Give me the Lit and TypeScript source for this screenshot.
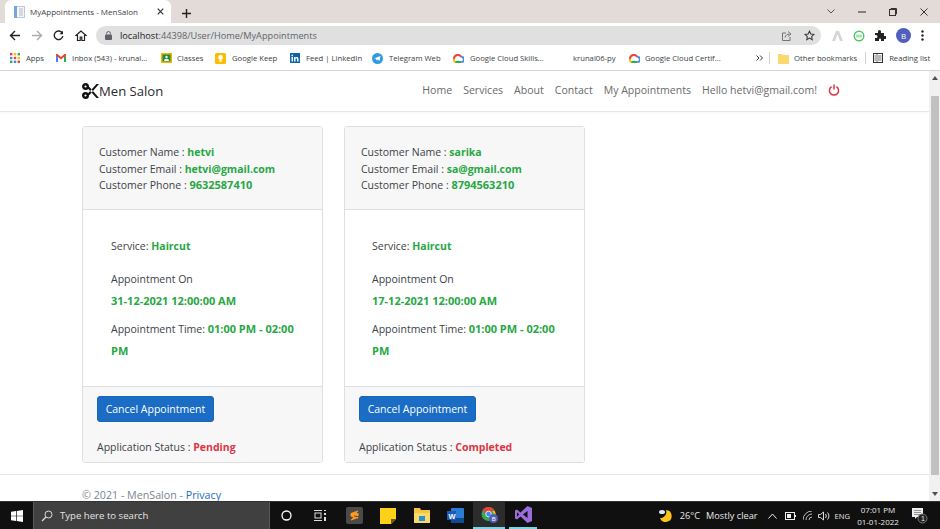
import { LitElement, html, css, svg } from "lit";
import { customElement } from "lit/decorators.js";

const cloud = svg`<svg width="12" height="10" viewBox="0 0 24 20"><path d="M4 12a8 8 0 0 1 15-4" fill="none" stroke="#ea4335" stroke-width="4"/><path d="M19 8a5 5 0 0 1 0 10" fill="none" stroke="#4285f4" stroke-width="4"/><path d="M19 18H6" stroke="#34a853" stroke-width="4"/><path d="M7 18a5 5 0 0 1-3-6" fill="none" stroke="#fbbc04" stroke-width="4"/></svg>`;
const bookmarks = [
  { w: 46, gap: 6, t: "Apps", i: svg`<svg width="10" height="10" viewBox="0 0 10 10"><g fill="#ea4335"><rect width="2.4" height="2.4"/><rect x="3.8" width="2.4" height="2.4" fill="#fbbc04"/><rect x="7.6" width="2.4" height="2.4" fill="#34a853"/><rect y="3.8" width="2.4" height="2.4" fill="#4285f4"/><rect x="3.8" y="3.8" width="2.4" height="2.4"/><rect x="7.6" y="3.8" width="2.4" height="2.4" fill="#fbbc04"/><rect y="7.6" width="2.4" height="2.4" fill="#34a853"/><rect x="3.8" y="7.6" width="2.4" height="2.4" fill="#4285f4"/><rect x="7.6" y="7.6" width="2.4" height="2.4"/></g></svg>` },
  { w: 105, gap: 6, t: "Inbox (543) - krunal...", i: svg`<svg width="10" height="8" viewBox="0 0 10 8"><path d="M0 0h1.500L5 3l3.500-3H10v8H8V3L5 5.500 2 3v5H0z" fill="#ea4335"/><path d="M0 2v6h2V3z" fill="#4285f4"/><path d="M10 2v6H8V3z" fill="#34a853"/></svg>` },
  { w: 54, gap: 5, t: "Classes", i: svg`<svg width="11" height="10" viewBox="0 0 11 10"><rect width="11" height="10" fill="#f4b400"/><rect x="1.500" y="1.500" width="8" height="7" fill="#1e8e3e"/><circle cx="5.500" cy="4" r="1.200" fill="#fff"/><path d="M3 8c0-3 5-3 5 0z" fill="#fff"/></svg>` },
  { w: 75, gap: 6, t: "Google Keep", i: svg`<svg width="11" height="11" viewBox="0 0 11 11"><rect width="11" height="11" rx="1.500" fill="#fbbc04"/><circle cx="5.500" cy="4.500" r="2.400" fill="#fff"/><rect x="4.300" y="7.200" width="2.400" height="1.500" fill="#fff"/></svg>` },
  { w: 82, gap: 6, t: "Feed | LinkedIn", i: svg`<svg width="10" height="10" viewBox="0 0 10 10"><rect width="10" height="10" fill="#0a66a8"/><rect x="1.500" y="4" width="1.500" height="4.500" fill="#fff"/><rect x="1.500" y="1.700" width="1.500" height="1.500" fill="#fff"/><path d="M4 4h1.400v.7C6.200 3.600 8.500 3.700 8.500 5.800v2.700H7V6.100c0-1.300-1.500-1.200-1.500 0v2.400H4z" fill="#fff"/></svg>` },
  { w: 80, gap: 6, t: "Telegram Web", i: svg`<svg width="11" height="11" viewBox="0 0 11 11"><circle cx="5.500" cy="5.500" r="5.500" fill="#2f9ae0"/><path d="M2 5.500l6.500-2.600-1 5-2-1.400-1 1-.4-1.800z" fill="#fff"/></svg>` },
  { w: 121, gap: 6, t: "Google Cloud Skills...", i: cloud },
  { w: 55, gap: 0, t: "krunal06-py", i: null },
  { w: 128, gap: 5, t: "Google Cloud Certif...", i: cloud },
];

const cards = [
  { name: "hetvi", email: "hetvi@gmail.com", phone: "9632587410", on: "31-12-2021 12:00:00 AM", status: "Pending" },
  { name: "sarika", email: "sa@gmail.com", phone: "8794563210", on: "17-12-2021 12:00:00 AM", status: "Completed" },
];

@customElement("app-root")
export class AppRoot extends LitElement {
  static styles = css`
    :host { display: flex; flex-direction: column; width: 940px; height: 529px; overflow: hidden; background: #fff; font-family: "Open Sans", "Noto Sans", sans-serif; color: #212529; }
    svg { display: block; flex: none; }

    .tabs { height: 23px; flex: none; background: #e3dbd8; display: flex; align-items: flex-end; padding-left: 5px; }
    .tab { width: 166px; height: 23px; background: #fff; border-radius: 6px 6px 0 0; display: flex; align-items: center; padding: 0 0 0 9px; box-sizing: border-box; font: 8px "Open Sans", sans-serif; color: #3c4043; }
    .tab .ttl { margin-left: 5px; flex: 1; white-space: nowrap; }
    .tab .x { margin-right: 7px; }
    .newtab { margin: 0 0 5px 11px; }
    .winctl { margin-left: auto; display: flex; align-items: center; align-self: center; gap: 23px; padding-right: 12px; }

    .toolbar { height: 23px; flex: none; margin-top: 1px; display: flex; align-items: center; padding-left: 9px; background: #fff; }
    .nav { display: flex; align-items: center; gap: 10px; }
    .nav .home { margin-left: 1px; }
    .omni { margin-left: 9px; width: 725px; height: 19px; border-radius: 10px; background: #e0e0e0; display: flex; align-items: center; padding-left: 9px; box-sizing: border-box; font: 9.2px "Open Sans", sans-serif; color: #5f6368; }
    .omni b { font-weight: 400; color: #202124; }
    .omni .url { margin-left: 8px; flex: 1; }
    .omni .r { display: flex; gap: 12px; align-items: center; padding-right: 6px; }
    .tb-r { display: flex; align-items: center; gap: 10px; margin-left: 11px; }
    .avatar { width: 15px; height: 15px; border-radius: 50%; background: #4f5fbb; color: #fff; font-size: 8px; display: flex; align-items: center; justify-content: center; }

    .bm { height: 23px; flex: none; box-sizing: border-box; display: flex; align-items: center; padding: 0 0 1px 10px; border-bottom: 0; box-shadow: inset 0 -1px 0 #fff; font: 7.7px "Open Sans", sans-serif; color: #3c4043; background: #fff; }
    .rule { height: 1px; flex: none; background: #d4d4d4; }
    .bi { display: flex; align-items: center; white-space: nowrap; flex: none; overflow: hidden; }
    .bm .end { display: flex; align-items: center; flex: none; }
    .sep { width: 1px; height: 12px; background: #d0d0d0; margin-left: 6px; }
    .sep.s2 { margin-left: 8px; }
    .folder { margin-left: 8px; }
    .ob { margin-left: 5px; }
    .rl-i { margin-left: 7px; }
    .rl { margin-left: 6px; }

    .view { flex: 1; min-height: 0; display: flex; }
    .page { flex: 1; min-width: 0; overflow: hidden; font-size: 10.5px; }
    .navbar { height: 40px; border-bottom: 1px solid #e4e6e8; box-shadow: 0 1px 3px rgba(0,0,0,.04); display: flex; align-items: center; padding: 0 89px 0 82px; }
    .brand { display: flex; align-items: center; font-size: 13.1px; color: #2b2b2b; }
    .links { margin-left: auto; display: flex; align-items: center; gap: 11px; font-size: 10.55px; color: #6a6a6a; margin-top: -2px; }
    .cards { display: flex; gap: 21px; padding: 14px 0 0 82px; align-items: flex-start; }
    .card { width: 241px; height: 337px; box-sizing: border-box; border: 1px solid #dfdfdf; border-radius: 3px; display: flex; flex-direction: column; font-size: 10.5px; color: #3c4248; }
    .hd { height: 83px; flex: none; box-sizing: border-box; background: #f7f7f7; border-bottom: 1px solid #dfdfdf; padding: 17px 16px 0; line-height: 16.5px; }
    .bd { flex: 1; padding: 25px 24px 0 28px; line-height: 22px; }
    .card + .card .bd { padding-left: 27px; }
    .bd p { margin: 0 0 11px; }
    .bd p.tight { margin-bottom: 6px; }
    .ft { height: 76px; flex: none; background: #f7f7f7; border-top: 1px solid #dfdfdf; padding: 8.500px 14px 0; box-sizing: border-box; }
    .btn { width: 117px; height: 26px; background: #1a6cc4; color: #fff; border: 1px solid #1766ba; border-radius: 3px; font: 10.5px "Open Sans", sans-serif; padding: 0; display: block; }
    .stat { margin-top: 17px; line-height: 16px; }
    .g { color: #28a745; font-weight: 700; }
    .n { font-size: 11px; }
    .rd { color: #dc3545; font-weight: 700; }
    .foot { margin-top: 11px; border-top: 1px solid #e4e6e8; padding: 13px 0 0 82px; font-size: 10.7px; color: #7c858c; line-height: 14px; }
    .foot a { color: #1b6ec2; }

    .sb { width: 11px; flex: none; background: #f1f1f1; display: flex; flex-direction: column; align-items: center; }
    .sb .arrow { height: 25px; flex: none; padding-top: 5px; box-sizing: border-box; }
    .sb .thumb { width: 8px; height: 379px; background: #c1c1c1; flex: none; }
    .sb .arrow2 { margin-top: auto; height: auto; padding: 0 0 5px; }

    .taskbar { height: 28px; flex: none; background: #101010; display: flex; align-items: center; color: #e8e8e8; font: 9px "Open Sans", sans-serif; border-top: 1px solid #333; box-sizing: border-box; }
    .win { width: 33px; display: flex; justify-content: center; flex: none; }
    .search { width: 237px; height: 27px; background: #404040; border-left: 1px solid #5a5a5a; border-right: 1px solid #5a5a5a; display: flex; align-items: center; padding-left: 7px; box-sizing: border-box; font-size: 9.6px; color: #e4e4e4; gap: 7px; flex: none; }
    .apps { display: flex; align-items: center; height: 27px; flex: none; }
    .app { display: flex; align-items: center; justify-content: center; height: 27px; flex: none; box-sizing: border-box; }
    .app.on { background: #2c2c2c; border-bottom: 2px solid #76d6e8; }
    .app.u { border-bottom: 2px solid #76d6e8; }
    .w28 { width: 28px; margin-left: 4px; }
    .w31 { width: 31px; }
    .w32 { width: 32px; }
    .w33 { width: 33px; }
    .w36 { width: 36px; }
    .chrome { margin-left: 2px; }
    .tray { margin-left: auto; display: flex; align-items: center; height: 27px; flex: none; }
    .temp { margin-left: 8px; font-size: 9.2px; }
    .cond { margin-left: 6px; font-size: 9.2px; }
    .caret { margin-left: 10px; }
    .batt { margin-left: 8px; }
    .wifi { margin-left: 7px; }
    .spk { margin-left: 5px; }
    .eng { margin-left: 5px; font-size: 7.6px; }
    .clock { text-align: center; line-height: 12px; font-size: 8px; width: 44px; margin-left: 6px; }
    .notif { margin: 0 12px 0 11px; }
  `;

  render() {
    return html`
      <div class="tabs">
        <div class="tab">
          <svg width="11" height="12" viewBox="0 0 11 12"><rect x=".5" y=".5" width="10" height="11" fill="#f4f6fa" stroke="#bcc8da"/><rect x="0" y="0" width="3" height="12" fill="#7aa5d8"/><path d="M5 3h4M5 5h4M5 7h4M5 9h4" stroke="#bbb"/></svg>
          <span class="ttl">MyAppointments - MenSalon</span>
          <svg class="x" width="7" height="7" viewBox="0 0 7 7"><path d="M.7.7l5.600 5.600M6.300.7L.7 6.300" stroke="#333" stroke-width="1.200"/></svg>
        </div>
        <svg class="newtab" width="9" height="9" viewBox="0 0 9 9"><path d="M4.500 0v9M0 4.500h9" stroke="#222" stroke-width="1.400"/></svg>
        <div class="winctl">
          <svg width="8" height="5" viewBox="0 0 8 5"><path d="M.5.500L4 4 7.500.5" fill="none" stroke="#555"/></svg>
          <svg width="8" height="2" viewBox="0 0 8 2"><path d="M0 1h8" stroke="#444" stroke-width="1.200"/></svg>
          <svg width="8" height="8" viewBox="0 0 8 8"><rect x=".5" y="1.500" width="6" height="6" fill="none" stroke="#333"/><path d="M2 1.500V.5h5.500V6H6.500" fill="none" stroke="#333"/></svg>
          <svg width="8" height="8" viewBox="0 0 8 8"><path d="M.5.5l7 7M7.500.5l-7 7" stroke="#333"/></svg>
        </div>
      </div>

      <div class="toolbar">
        <div class="nav">
          <svg width="12" height="11" viewBox="0 0 12 11"><path d="M11 5.500H1.500M6 1L1.500 5.500 6 10" fill="none" stroke="#222" stroke-width="1.400"/></svg>
          <svg width="12" height="11" viewBox="0 0 12 11"><path d="M1 5.500h9.500M6 1l4.500 4.500L6 10" fill="none" stroke="#aaa" stroke-width="1.400"/></svg>
          <svg width="11" height="11" viewBox="0 0 11 11"><path d="M9.300 3.200A4.300 4.300 0 1 0 9.800 6" fill="none" stroke="#222" stroke-width="1.400"/><path d="M10 .8v3.500H6.500z" fill="#222"/></svg>
          <svg class="home" width="12" height="11" viewBox="0 0 12 11"><path d="M6 1L1 5.500h1.500v5h2.700V7h1.600v3.500h2.700v-5H11z" fill="none" stroke="#222" stroke-width="1.200"/></svg>
        </div>
        <div class="omni">
          <svg width="7" height="9" viewBox="0 0 7 9"><rect y="3.500" width="7" height="5.500" rx="1" fill="#5f6368"/><path d="M1.700 3.500V2.300a1.800 1.800 0 0 1 3.600 0v1.200" fill="none" stroke="#5f6368"/></svg>
          <span class="url"><b>localhost</b>:44398/User/Home/MyAppointments</span>
          <span class="r">
            <svg width="10" height="10" viewBox="0 0 10 10"><path d="M4 2H.5v7.500h7.500V6M3 6.500c.5-2.500 2.500-3.500 4.500-3.500M6 .5L9 3 6 5.500" fill="none" stroke="#666" stroke-width=".9"/></svg>
            <svg width="11" height="11" viewBox="0 0 24 24"><path d="M12 2.500l2.900 6.300 6.800.8-5 4.700 1.300 6.800-6-3.400-6 3.400 1.300-6.800-5-4.700 6.800-.8z" fill="none" stroke="#333" stroke-width="2.200"/></svg>
          </span>
        </div>
        <div class="tb-r">
          <svg width="11" height="10" viewBox="0 0 11 10"><path d="M0 10L4 0h3l4 10H8L5.500 3 3 10z" fill="#d5d5d5"/></svg>
          <svg width="12" height="12" viewBox="0 0 12 12"><circle cx="6" cy="6" r="4.800" fill="#fff" stroke="#55c56a" stroke-width="1.400"/><path d="M4 4.500v3M6 4.500v3M8 4.500v3" stroke="#55c56a"/></svg>
          <svg width="11" height="11" viewBox="0 0 11 11"><path d="M0 3h3V1.500a1.500 1.500 0 0 1 3 0V3h3v3h1a1.500 1.500 0 0 1 0 3H9v2H6V9.500a1 1 0 0 0-2 0V11H0V8h1a1.500 1.500 0 0 0 0-3H0z" fill="#222"/></svg>
          <span class="avatar">B</span>
          <svg width="3" height="11" viewBox="0 0 3 11"><g fill="#222"><circle cx="1.500" cy="1.500" r="1.200"/><circle cx="1.500" cy="5.500" r="1.200"/><circle cx="1.500" cy="9.500" r="1.200"/></g></svg>
        </div>
      </div>

      <div class="bm">
        ${bookmarks.map((b) => html`<div class="bi" style="width:${b.w}px">${b.i}<span style="margin-left:${b.gap}px">${b.t}</span></div>`)}
        <span class="end">
          <svg width="7" height="6" viewBox="0 0 7 6"><path d="M.5.500L3 3 .5 5.500M4 .5L6.500 3 4 5.500" fill="none" stroke="#333" stroke-width="1"/></svg>
          <span class="sep"></span>
          <svg class="folder" width="11" height="11" viewBox="0 0 11 11"><path d="M0 1h4l1 1h6v9H0z" fill="#fbd96e"/></svg>
          <span class="ob">Other bookmarks</span>
          <span class="sep s2"></span>
          <svg class="rl-i" width="10" height="10" viewBox="0 0 10 10"><rect x=".5" y=".5" width="9" height="9" fill="none" stroke="#333"/><path d="M4 1v8M1.500 3h1.500M1.500 5h1.500M1.500 7h1.500M5 3h3.500M5 5h3.500M5 7h3.500" stroke="#333" stroke-width=".7"/></svg>
          <span class="rl">Reading list</span>
        </span>
      </div>
      <div class="rule"></div>

      <div class="view">
        <div class="page">
          <div class="navbar">
            <div class="brand">
              <svg width="17" height="16" viewBox="0 0 17 16"><g fill="none" stroke="#111" stroke-width="2.400"><circle cx="3.500" cy="3.500" r="2.300"/><circle cx="3.500" cy="12.500" r="2.300"/></g><path d="M5 4.500L14.500 15H17L7.500 4zM5 11.500L14.500 1H17L7.500 12z" fill="#111"/></svg>
              <span>Men Salon</span>
            </div>
            <div class="links">
              <span>Home</span><span>Services</span><span>About</span><span>Contact</span><span>My Appointments</span><span>Hello hetvi@gmail.com!</span>
              <svg width="12" height="12" viewBox="0 0 12 12"><path d="M3.600 2.600a4.600 4.600 0 1 0 4.800 0" fill="none" stroke="#dc3545" stroke-width="1.500"/><path d="M6 .5v5" stroke="#dc3545" stroke-width="1.500"/></svg>
            </div>
          </div>
          <div class="cards">
            ${cards.map((c) => html`
              <div class="card">
                <div class="hd">
                  Customer Name : <span class="g">${c.name}</span><br>
                  Customer Email : <span class="g">${c.email}</span><br>
                  Customer Phone : <span class="g n">${c.phone}</span>
                </div>
                <div class="bd">
                  <p>Service: <span class="g">Haircut</span></p>
                  <p class="tight">Appointment On<br><span class="g n">${c.on}</span></p>
                  <p>Appointment Time: <span class="g n">01:00 PM - 02:00 PM</span></p>
                </div>
                <div class="ft">
                  <button class="btn">Cancel Appointment</button>
                  <div class="stat">Application Status : <span class="rd">${c.status}</span></div>
                </div>
              </div>`)}
          </div>
          <div class="foot">© 2021 - MenSalon - <a>Privacy</a></div>
        </div>
        <div class="sb">
          <div class="arrow"><svg width="6" height="4" viewBox="0 0 6 4"><path d="M3 0l3 4H0z" fill="#505050"/></svg></div>
          <div class="thumb"></div>
          <div class="arrow arrow2"><svg width="6" height="4" viewBox="0 0 6 4"><path d="M3 4l3-4H0z" fill="#505050"/></svg></div>
        </div>
      </div>

      <div class="taskbar">
        <div class="win"><svg width="12" height="12" viewBox="0 0 12 12"><path d="M0 1.700l5-.7v4.700H0zM5.700.9L12 0v5.700H5.700zM0 6.300h5V11l-5-.7zM5.700 6.300H12V12l-6.300-.9z" fill="#fff"/></svg></div>
        <div class="search">
          <svg width="12" height="12" viewBox="0 0 12 12"><circle cx="7.500" cy="4.500" r="3.500" fill="none" stroke="#ddd"/><path d="M5 7L1 11" stroke="#ddd" stroke-width="1.200"/></svg>
          <span>Type here to search</span>
        </div>
        <div class="apps">
          <div class="app w33"><svg width="11" height="11" viewBox="0 0 11 11"><circle cx="5.500" cy="5.500" r="4.500" fill="none" stroke="#fff" stroke-width="1.300"/></svg></div>
          <div class="app w33"><svg width="12" height="11" viewBox="0 0 12 11"><path d="M0 0h8v1H0zM0 10h8v1H0z" fill="#ddd"/><rect x="1" y="3" width="6" height="5" fill="none" stroke="#ddd"/><path d="M10 0h2v1h-2zM10 3h2v2h-2zM10 7h2v4h-2z" fill="#ddd"/></svg></div>
          <div class="app w36"><svg width="17" height="17" viewBox="0 0 17 17"><rect width="17" height="17" rx="2" fill="#4a4a4a"/><path d="M12 4L5 6.500v2.500l7 2v-.5L5 13M5 6.500l7 2.500V6" fill="#ff9a1f" stroke="#ff9a1f"/></svg></div>
          <div class="app w32"><svg width="16" height="16" viewBox="0 0 16 16"><path d="M0 0h16v11l-5 5H0z" fill="#fcd116"/><path d="M16 11l-5 5v-5z" fill="#6b5a10"/></svg></div>
          <div class="app w36"><svg width="16" height="15" viewBox="0 0 16 15"><path d="M0 0h6l1 2h9v13H0z" fill="#f5c542"/><rect y="5" width="16" height="10" fill="#fbd968"/><rect x="5" y="8" width="6" height="5" fill="#2b8fd4"/></svg></div>
          <div class="app w31"><svg width="17" height="15" viewBox="0 0 17 15"><rect x="4" width="13" height="15" rx="1" fill="#2b7cd3"/><rect x="4" y="10" width="13" height="5" fill="#124a96"/><rect y="3" width="9" height="9" fill="#185abd"/><text x="1.500" y="10.500" font-size="7.500" fill="#fff" font-weight="700" font-family="Liberation Sans">W</text></svg></div>
          <div class="app on w32 chrome"><svg width="17" height="17" viewBox="0 0 17 17"><circle cx="7.500" cy="8" r="7" fill="#34a853"/><path d="M7.500 1a7 7 0 0 1 6.300 4H7.500a3 3 0 0 0-2.800 4.200L1.700 4A7 7 0 0 1 7.500 1z" fill="#ea4335"/><path d="M13.800 5a7 7 0 0 1-5 10l3-5.500A3 3 0 0 0 11 5z" fill="#fbbc04"/><circle cx="7.500" cy="8" r="2.800" fill="#4285f4" stroke="#fff" stroke-width=".8"/><circle cx="12.500" cy="12.500" r="4.500" fill="#4f5fbb"/><text x="10.800" y="14.700" font-size="6" fill="#fff" font-family="Liberation Sans">B</text></svg></div>
          <div class="app u w28"><svg width="17" height="17" viewBox="0 0 17 17"><path d="M12.500 0L17 2v13l-4.500 2-7-6.500L2 13.500 0 12.500v-8L2 3.500 5.500 6.500zM12.500 5L8 8.500l4.500 3.500zM2 6.300v4.400l2.200-2.200z" fill="#9a6cdc"/></svg></div>
        </div>
        <div class="tray">
          <svg width="13" height="13" viewBox="0 0 13 13"><path d="M7 1a6 6 0 1 1-6 8 6 6 0 0 0 6-8z" fill="#fcc419"/><ellipse cx="3" cy="3" rx="3" ry="2" fill="#dce8f2"/></svg>
          <span class="temp">26°C</span>
          <span class="cond">Mostly clear</span>
          <svg class="caret" width="9" height="6" viewBox="0 0 9 6"><path d="M.5 5.500L4.500 1l4 4.500" fill="none" stroke="#eee"/></svg>
          <svg class="batt" width="11" height="8" viewBox="0 0 11 8"><rect x=".5" y=".5" width="9" height="7" fill="none" stroke="#eee"/><rect x="2" y="2" width="4" height="4" fill="#eee"/><rect x="10" y="3" width="1" height="2" fill="#eee"/></svg>
          <svg class="wifi" width="10" height="9" viewBox="0 0 10 9"><path d="M0 9a9 9 0 0 1 9-9M3 9a6 6 0 0 1 6-6M6 9a3 3 0 0 1 3-3" fill="none" stroke="#bbb"/></svg>
          <svg class="spk" width="12" height="10" viewBox="0 0 12 10"><path d="M.5 3.500h2L5.500 1v8l-3-2.500h-2z" fill="none" stroke="#eee" stroke-width=".9"/><path d="M7.500 3a3 3 0 0 1 0 4M9.500 1.500a5 5 0 0 1 0 7" fill="none" stroke="#eee" stroke-width=".9"/></svg>
          <span class="eng">ENG</span>
          <div class="clock">07:01 PM<br>01-01-2022</div>
          <svg class="notif" width="17" height="17" viewBox="0 0 17 17"><path d="M1 1h11v9H6l-2 2v-2H1z" fill="#eee"/><path d="M3 3.500h7M3 5.500h7M3 7.500h7" stroke="#555" stroke-width=".6"/><circle cx="11.500" cy="11.500" r="4.500" fill="#222" stroke="#777"/><text x="10" y="14" font-size="7" fill="#eee" font-family="Liberation Sans">1</text></svg>
        </div>
      </div>
    `;
  }
}
